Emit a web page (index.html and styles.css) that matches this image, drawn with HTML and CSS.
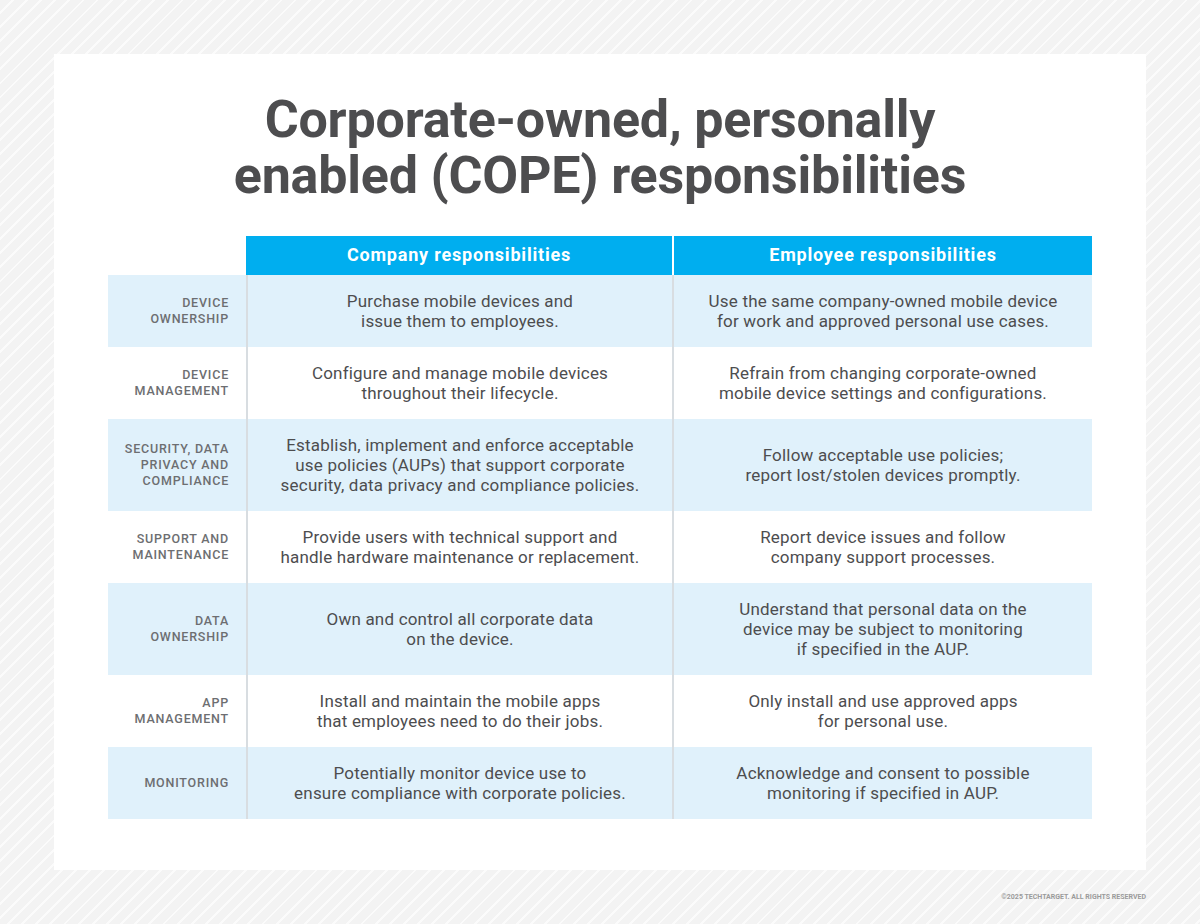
FILE: index.html
```html
<!DOCTYPE html>
<html lang="en">
<head>
<meta charset="utf-8">
<title>COPE responsibilities</title>
<link rel="stylesheet" href="styles.css">
</head>
<body>
<main class="page">
  <section class="card">
    <h1 class="title">Corporate-owned, personally<br>enabled (COPE) responsibilities</h1>
    <div class="table">
      <div class="row head">
        <div class="label"></div>
        <div class="cell">Company responsibilities</div>
        <div class="cell">Employee responsibilities</div>
      </div>
      <div class="row tint">
        <div class="label">Device<br>ownership</div>
        <div class="cell">Purchase mobile devices and<br>issue them to employees.</div>
        <div class="cell">Use the same company-owned mobile device<br>for work and approved personal use cases.</div>
      </div>
      <div class="row">
        <div class="label">Device<br>management</div>
        <div class="cell">Configure and manage mobile devices<br>throughout their lifecycle.</div>
        <div class="cell">Refrain from changing corporate-owned<br>mobile device settings and configurations.</div>
      </div>
      <div class="row tint">
        <div class="label">Security, data<br>privacy and<br>compliance</div>
        <div class="cell">Establish, implement and enforce acceptable<br>use policies (AUPs) that support corporate<br>security, data privacy and compliance policies.</div>
        <div class="cell">Follow acceptable use policies;<br>report lost/stolen devices promptly.</div>
      </div>
      <div class="row">
        <div class="label">Support and<br>maintenance</div>
        <div class="cell">Provide users with technical support and<br>handle hardware maintenance or replacement.</div>
        <div class="cell">Report device issues and follow<br>company support processes.</div>
      </div>
      <div class="row tint">
        <div class="label">Data<br>ownership</div>
        <div class="cell">Own and control all corporate data<br>on the device.</div>
        <div class="cell">Understand that personal data on the<br>device may be subject to monitoring<br>if specified in the AUP.</div>
      </div>
      <div class="row">
        <div class="label">App<br>management</div>
        <div class="cell">Install and maintain the mobile apps<br>that employees need to do their jobs.</div>
        <div class="cell">Only install and use approved apps<br>for personal use.</div>
      </div>
      <div class="row tint">
        <div class="label">Monitoring</div>
        <div class="cell">Potentially monitor device use to<br>ensure compliance with corporate policies.</div>
        <div class="cell">Acknowledge and consent to possible<br>monitoring if specified in AUP.</div>
      </div>
    </div>
  </section>
  <p class="copy">©2025 TechTarget. All rights reserved</p>
</main>
</body>
</html>
```

FILE: styles.css
```css
html, body {
  margin: 0;
  padding: 0;
}
body {
  background-color: #f3f3f3;
  background-image: repeating-linear-gradient(135deg, #f3f3f3 0px, #f3f3f3 8px, #fbfbfb 8px, #fbfbfb 10px);
  font-family: Roboto, "Liberation Sans", sans-serif;
  color: #4d4d4f;
  width: 1200px;
  height: 924px;
  overflow: hidden;
}
.page {
  padding: 54px 54px 0 54px;
}
.card {
  background: #ffffff;
  padding: 38px 54px 51px 54px;
}
.title {
  margin: 0 0 32px 0;
  text-align: center;
  font-size: 52px;
  line-height: 56px;
  font-weight: 700;
  letter-spacing: -0.2px;
  color: #4d4d4f;
}
.table {
  display: flex;
  flex-direction: column;
}
.row {
  display: grid;
  grid-template-columns: 138px 426px 420px;
}
.row.tint {
  background: #e0f1fb;
}
.label {
  display: flex;
  align-items: center;
  justify-content: flex-end;
  text-align: right;
  padding-right: 17px;
  font-size: 12.5px;
  line-height: 16px;
  font-weight: 500;
  text-transform: uppercase;
  letter-spacing: 0.8px;
  color: #6d6e71;
}
.cell {
  border-left: 2px solid #d8dde1;
  display: flex;
  align-items: center;
  justify-content: center;
  text-align: center;
  font-size: 17px;
  line-height: 20px;
  letter-spacing: 0.2px;
  padding: 16px 0;
  color: #4d4d4f;
}
.row.head {
  background: #ffffff;
  height: 39px;
}
.row.head .cell {
  background: #00aeef;
  color: #ffffff;
  font-weight: 700;
  font-size: 18px;
  letter-spacing: 0.8px;
  padding: 0 0 2px 0;
  border-left: 2px solid #ffffff;
}
.row.head .cell:nth-child(2) {
  border-left: none;
}
.copy {
  margin: 23px 0 0 0;
  text-align: right;
  font-size: 7px;
  line-height: 9px;
  font-weight: 700;
  text-transform: uppercase;
  color: #9b9b9b;
}
```
